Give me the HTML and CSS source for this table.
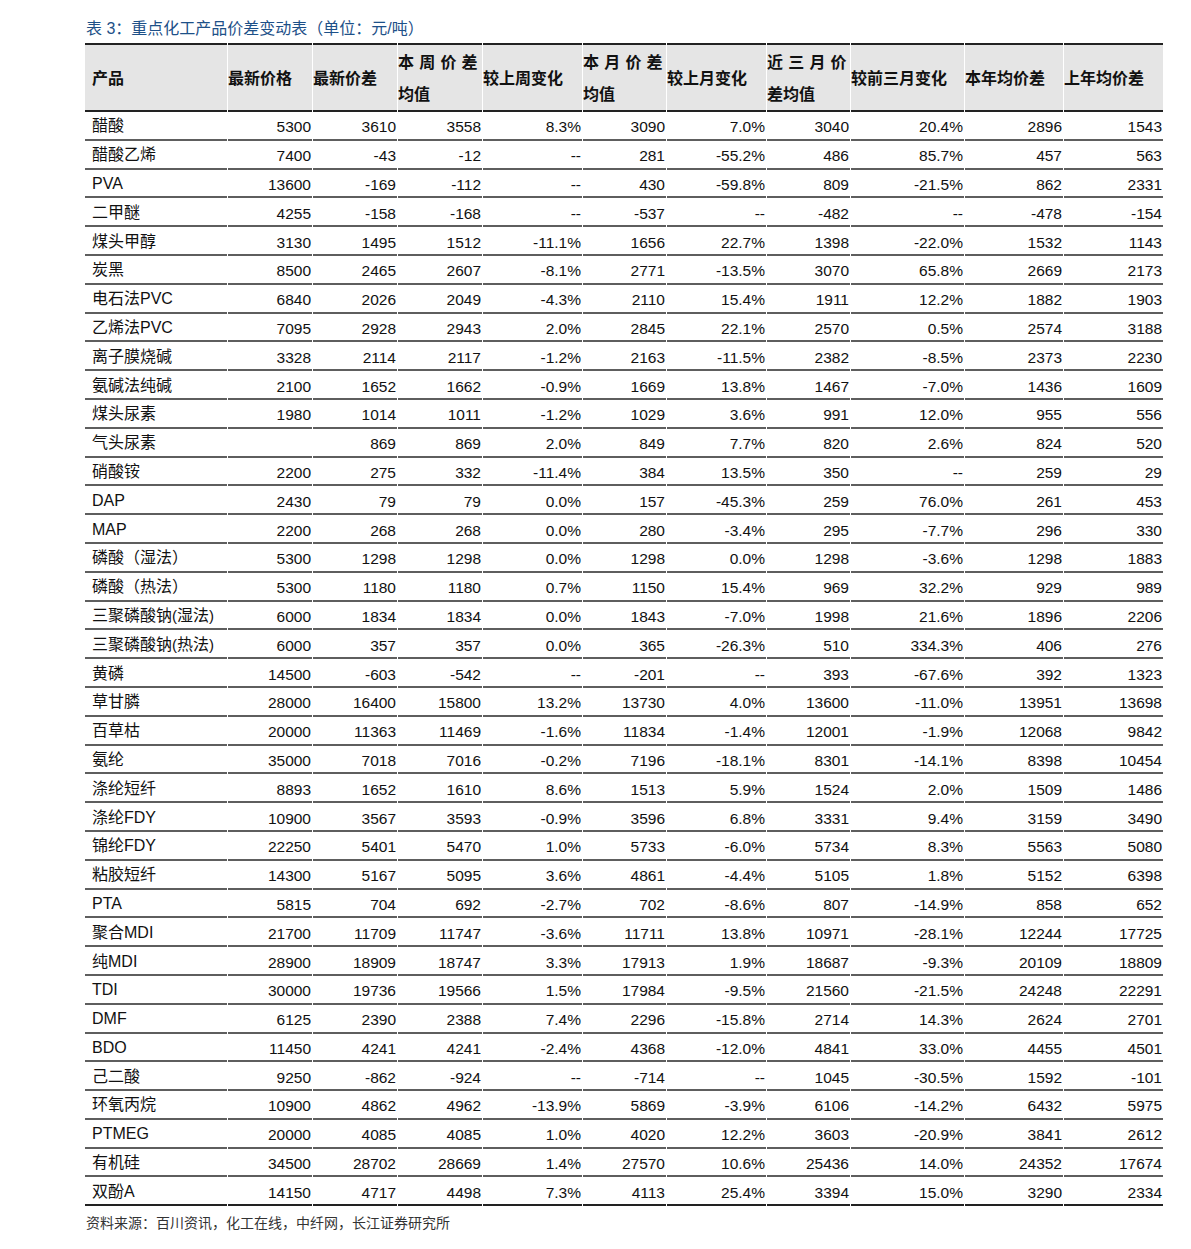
FILE: index.html
```html
<!DOCTYPE html>
<html lang="zh-CN">
<head>
<meta charset="utf-8">
<title>表 3：重点化工产品价差变动表</title>
<link rel="stylesheet" href="styles.css">
</head>
<body>
<div class="page">
  <div class="title">表 3：重点化工产品价差变动表（单位：元/吨）</div>
  <table class="data">
    <colgroup>
      <col class="c-name"><col class="c84"><col class="c84"><col class="c84"><col class="c99"><col class="c83"><col class="c99"><col class="c83"><col class="c113"><col class="c98"><col class="c99">
    </colgroup>
    <thead>
      <tr>
        <th class="th-name">产品</th>
        <th>最新价格</th>
        <th>最新价差</th>
        <th><span class="l1">本周价差</span><span class="l2">均值</span></th>
        <th>较上周变化</th>
        <th><span class="l1">本月价差</span><span class="l2">均值</span></th>
        <th>较上月变化</th>
        <th><span class="l1">近三月价</span><span class="l2">差均值</span></th>
        <th>较前三月变化</th>
        <th>本年均价差</th>
        <th>上年均价差</th>
      </tr>
    </thead>
    <tbody>
      <tr><td>醋酸</td><td>5300</td><td>3610</td><td>3558</td><td>8.3%</td><td>3090</td><td>7.0%</td><td>3040</td><td>20.4%</td><td>2896</td><td>1543</td></tr>
      <tr><td>醋酸乙烯</td><td>7400</td><td>-43</td><td>-12</td><td>--</td><td>281</td><td>-55.2%</td><td>486</td><td>85.7%</td><td>457</td><td>563</td></tr>
      <tr><td>PVA</td><td>13600</td><td>-169</td><td>-112</td><td>--</td><td>430</td><td>-59.8%</td><td>809</td><td>-21.5%</td><td>862</td><td>2331</td></tr>
      <tr><td>二甲醚</td><td>4255</td><td>-158</td><td>-168</td><td>--</td><td>-537</td><td>--</td><td>-482</td><td>--</td><td>-478</td><td>-154</td></tr>
      <tr><td>煤头甲醇</td><td>3130</td><td>1495</td><td>1512</td><td>-11.1%</td><td>1656</td><td>22.7%</td><td>1398</td><td>-22.0%</td><td>1532</td><td>1143</td></tr>
      <tr><td>炭黑</td><td>8500</td><td>2465</td><td>2607</td><td>-8.1%</td><td>2771</td><td>-13.5%</td><td>3070</td><td>65.8%</td><td>2669</td><td>2173</td></tr>
      <tr><td>电石法PVC</td><td>6840</td><td>2026</td><td>2049</td><td>-4.3%</td><td>2110</td><td>15.4%</td><td>1911</td><td>12.2%</td><td>1882</td><td>1903</td></tr>
      <tr><td>乙烯法PVC</td><td>7095</td><td>2928</td><td>2943</td><td>2.0%</td><td>2845</td><td>22.1%</td><td>2570</td><td>0.5%</td><td>2574</td><td>3188</td></tr>
      <tr><td>离子膜烧碱</td><td>3328</td><td>2114</td><td>2117</td><td>-1.2%</td><td>2163</td><td>-11.5%</td><td>2382</td><td>-8.5%</td><td>2373</td><td>2230</td></tr>
      <tr><td>氨碱法纯碱</td><td>2100</td><td>1652</td><td>1662</td><td>-0.9%</td><td>1669</td><td>13.8%</td><td>1467</td><td>-7.0%</td><td>1436</td><td>1609</td></tr>
      <tr><td>煤头尿素</td><td>1980</td><td>1014</td><td>1011</td><td>-1.2%</td><td>1029</td><td>3.6%</td><td>991</td><td>12.0%</td><td>955</td><td>556</td></tr>
      <tr><td>气头尿素</td><td></td><td>869</td><td>869</td><td>2.0%</td><td>849</td><td>7.7%</td><td>820</td><td>2.6%</td><td>824</td><td>520</td></tr>
      <tr><td>硝酸铵</td><td>2200</td><td>275</td><td>332</td><td>-11.4%</td><td>384</td><td>13.5%</td><td>350</td><td>--</td><td>259</td><td>29</td></tr>
      <tr><td>DAP</td><td>2430</td><td>79</td><td>79</td><td>0.0%</td><td>157</td><td>-45.3%</td><td>259</td><td>76.0%</td><td>261</td><td>453</td></tr>
      <tr><td>MAP</td><td>2200</td><td>268</td><td>268</td><td>0.0%</td><td>280</td><td>-3.4%</td><td>295</td><td>-7.7%</td><td>296</td><td>330</td></tr>
      <tr><td>磷酸（湿法）</td><td>5300</td><td>1298</td><td>1298</td><td>0.0%</td><td>1298</td><td>0.0%</td><td>1298</td><td>-3.6%</td><td>1298</td><td>1883</td></tr>
      <tr><td>磷酸（热法）</td><td>5300</td><td>1180</td><td>1180</td><td>0.7%</td><td>1150</td><td>15.4%</td><td>969</td><td>32.2%</td><td>929</td><td>989</td></tr>
      <tr><td>三聚磷酸钠<span class="hp">(</span>湿法<span class="hp">)</span></td><td>6000</td><td>1834</td><td>1834</td><td>0.0%</td><td>1843</td><td>-7.0%</td><td>1998</td><td>21.6%</td><td>1896</td><td>2206</td></tr>
      <tr><td>三聚磷酸钠<span class="hp">(</span>热法<span class="hp">)</span></td><td>6000</td><td>357</td><td>357</td><td>0.0%</td><td>365</td><td>-26.3%</td><td>510</td><td>334.3%</td><td>406</td><td>276</td></tr>
      <tr><td>黄磷</td><td>14500</td><td>-603</td><td>-542</td><td>--</td><td>-201</td><td>--</td><td>393</td><td>-67.6%</td><td>392</td><td>1323</td></tr>
      <tr><td>草甘膦</td><td>28000</td><td>16400</td><td>15800</td><td>13.2%</td><td>13730</td><td>4.0%</td><td>13600</td><td>-11.0%</td><td>13951</td><td>13698</td></tr>
      <tr><td>百草枯</td><td>20000</td><td>11363</td><td>11469</td><td>-1.6%</td><td>11834</td><td>-1.4%</td><td>12001</td><td>-1.9%</td><td>12068</td><td>9842</td></tr>
      <tr><td>氨纶</td><td>35000</td><td>7018</td><td>7016</td><td>-0.2%</td><td>7196</td><td>-18.1%</td><td>8301</td><td>-14.1%</td><td>8398</td><td>10454</td></tr>
      <tr><td>涤纶短纤</td><td>8893</td><td>1652</td><td>1610</td><td>8.6%</td><td>1513</td><td>5.9%</td><td>1524</td><td>2.0%</td><td>1509</td><td>1486</td></tr>
      <tr><td>涤纶FDY</td><td>10900</td><td>3567</td><td>3593</td><td>-0.9%</td><td>3596</td><td>6.8%</td><td>3331</td><td>9.4%</td><td>3159</td><td>3490</td></tr>
      <tr><td>锦纶FDY</td><td>22250</td><td>5401</td><td>5470</td><td>1.0%</td><td>5733</td><td>-6.0%</td><td>5734</td><td>8.3%</td><td>5563</td><td>5080</td></tr>
      <tr><td>粘胶短纤</td><td>14300</td><td>5167</td><td>5095</td><td>3.6%</td><td>4861</td><td>-4.4%</td><td>5105</td><td>1.8%</td><td>5152</td><td>6398</td></tr>
      <tr><td>PTA</td><td>5815</td><td>704</td><td>692</td><td>-2.7%</td><td>702</td><td>-8.6%</td><td>807</td><td>-14.9%</td><td>858</td><td>652</td></tr>
      <tr><td>聚合MDI</td><td>21700</td><td>11709</td><td>11747</td><td>-3.6%</td><td>11711</td><td>13.8%</td><td>10971</td><td>-28.1%</td><td>12244</td><td>17725</td></tr>
      <tr><td>纯MDI</td><td>28900</td><td>18909</td><td>18747</td><td>3.3%</td><td>17913</td><td>1.9%</td><td>18687</td><td>-9.3%</td><td>20109</td><td>18809</td></tr>
      <tr><td>TDI</td><td>30000</td><td>19736</td><td>19566</td><td>1.5%</td><td>17984</td><td>-9.5%</td><td>21560</td><td>-21.5%</td><td>24248</td><td>22291</td></tr>
      <tr><td>DMF</td><td>6125</td><td>2390</td><td>2388</td><td>7.4%</td><td>2296</td><td>-15.8%</td><td>2714</td><td>14.3%</td><td>2624</td><td>2701</td></tr>
      <tr><td>BDO</td><td>11450</td><td>4241</td><td>4241</td><td>-2.4%</td><td>4368</td><td>-12.0%</td><td>4841</td><td>33.0%</td><td>4455</td><td>4501</td></tr>
      <tr><td>己二酸</td><td>9250</td><td>-862</td><td>-924</td><td>--</td><td>-714</td><td>--</td><td>1045</td><td>-30.5%</td><td>1592</td><td>-101</td></tr>
      <tr><td>环氧丙烷</td><td>10900</td><td>4862</td><td>4962</td><td>-13.9%</td><td>5869</td><td>-3.9%</td><td>6106</td><td>-14.2%</td><td>6432</td><td>5975</td></tr>
      <tr><td>PTMEG</td><td>20000</td><td>4085</td><td>4085</td><td>1.0%</td><td>4020</td><td>12.2%</td><td>3603</td><td>-20.9%</td><td>3841</td><td>2612</td></tr>
      <tr><td>有机硅</td><td>34500</td><td>28702</td><td>28669</td><td>1.4%</td><td>27570</td><td>10.6%</td><td>25436</td><td>14.0%</td><td>24352</td><td>17674</td></tr>
      <tr><td>双酚A</td><td>14150</td><td>4717</td><td>4498</td><td>7.3%</td><td>4113</td><td>25.4%</td><td>3394</td><td>15.0%</td><td>3290</td><td>2334</td></tr>
    </tbody>
  </table>
  <div class="source">资料来源：百川资讯，化工在线，中纤网，长江证券研究所</div>
</div>
</body>
</html>
```
FILE: styles.css
```css
html, body {
  margin: 0;
  padding: 0;
  background: #ffffff;
}

body {
  font-family: "Liberation Sans", "Noto Sans CJK SC", sans-serif;
  color: #111111;
}

.page {
  padding: 19px 0 0 84px;
}

.title {
  padding-left: 2px;
  font-size: 16px;
  line-height: 20px;
  height: 20px;
  color: #1d5088;
  margin-bottom: 4px;
}

.data {
  table-layout: fixed;
  width: 1080px;
  border-collapse: separate;
  border-spacing: 1px 0;
}

.c-name { width: 142px; }
.c84 { width: 84px; }
.c83 { width: 83px; }
.c99 { width: 99px; }
.c98 { width: 98px; }
.c113 { width: 113px; }

.data th {
  box-sizing: border-box;
  height: 68px;
  padding: 2px 0 0 0;
  background: #e5e5e5;
  border-top: 2px solid #222222;
  border-bottom: 2px solid #222222;
  text-align: left;
  vertical-align: middle;
  font-size: 16px;
  font-weight: 600;
  line-height: 20px;
  white-space: nowrap;
  color: #111111;
}

.data th.th-name {
  padding-left: 7px;
}

.data th .l1,
.data th .l2 {
  display: block;
  line-height: 31px;
}

.data th .l2 {
  padding-top: 1px;
}

.data th .l1 {
  letter-spacing: 5.2px;
}

.data td {
  box-sizing: border-box;
  height: 28.8px;
  padding: 4px 1px 0 0;
  border-bottom: 2px solid #5e5e5e;
  text-align: right;
  vertical-align: middle;
  font-size: 15.5px;
  line-height: 18px;
  white-space: nowrap;
  color: #111111;
}

.data td:first-child {
  text-align: left;
  padding: 2px 0 0 7px;
  font-size: 16px;
}

.data td .hp {
  font-size: 15px;
}

.data tbody tr:last-child td {
  border-bottom-color: #222222;
}

.source {
  padding-left: 2px;
  margin-top: 8px;
  font-size: 14px;
  line-height: 18px;
  color: #333333;
}
```
